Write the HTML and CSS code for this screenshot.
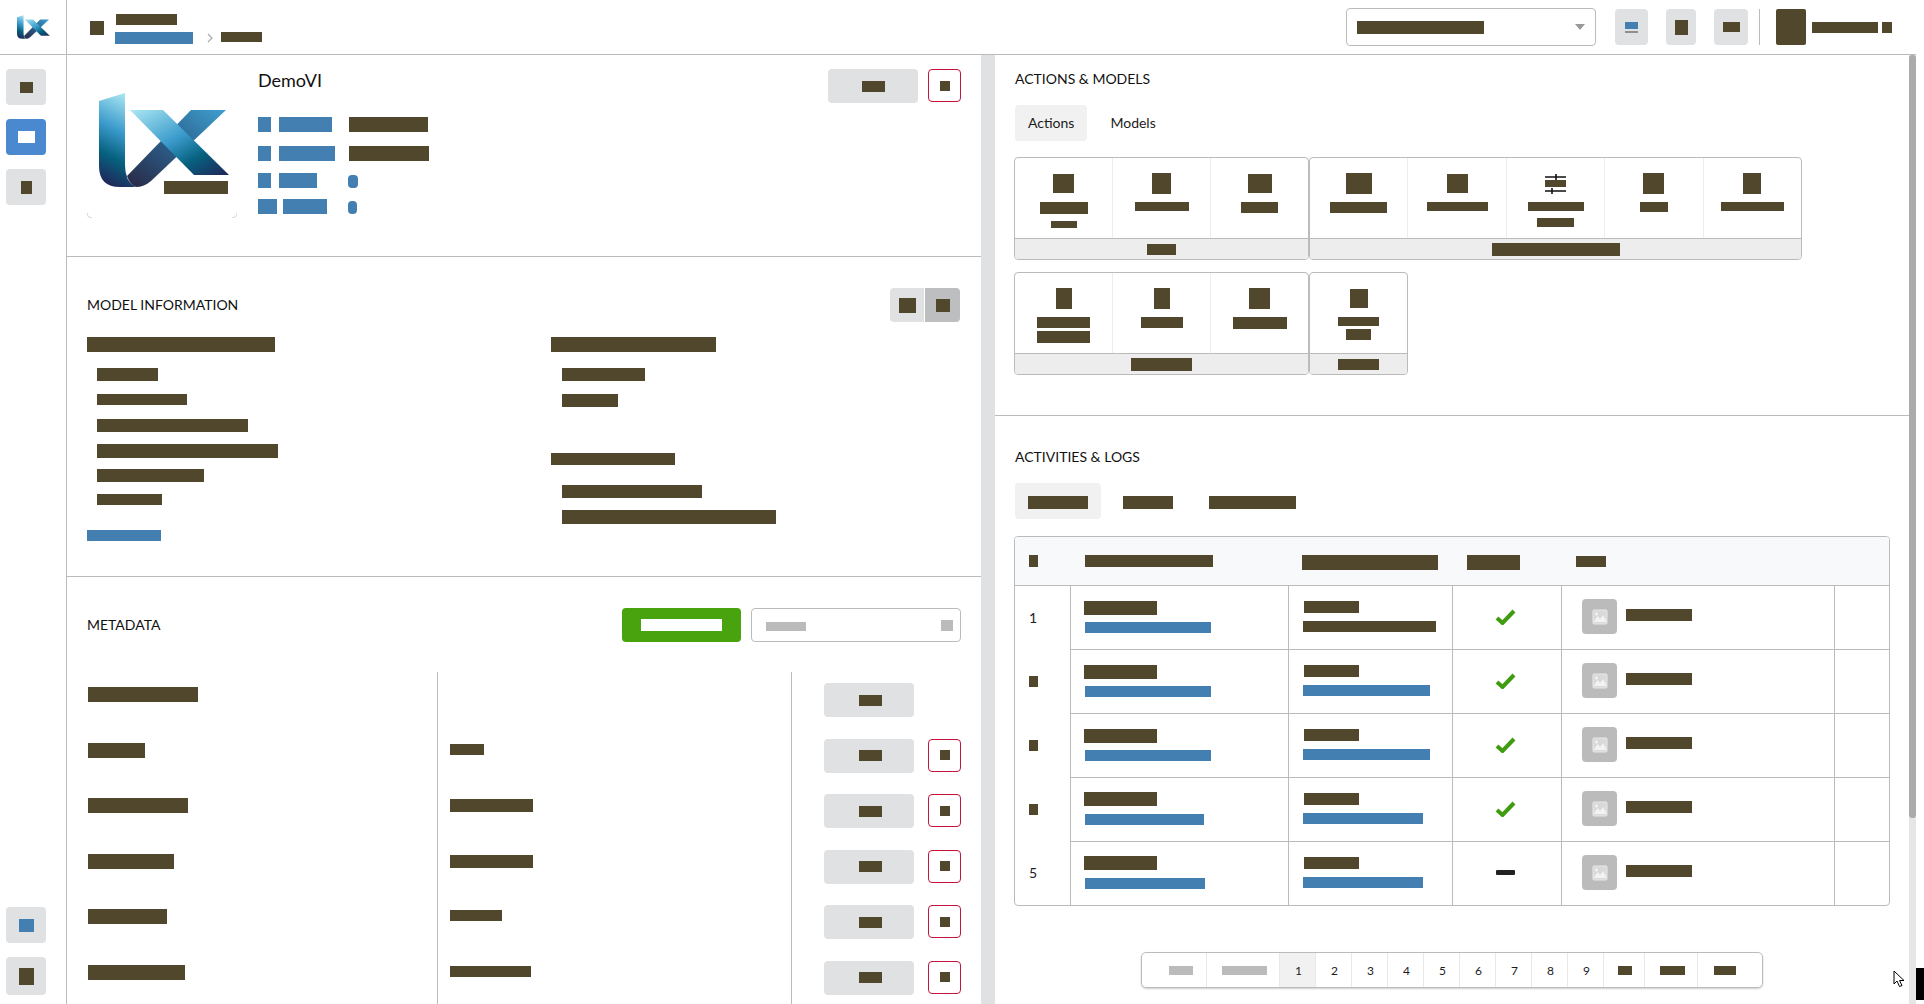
FILE: index.html
```html
<!DOCTYPE html>
<html lang="en">
<head>
    <meta charset="UTF-8">
    <meta name="viewport" content="width=device-width, initial-scale=1.0">
    <title>DemoVI</title>
    <link rel="stylesheet" href="styles.css">
</head>
<body>
    <svg class="defs" width="0" height="0">
        <defs>
            <linearGradient id="lGrad" x1="0.6" y1="0" x2="0.4" y2="1">
                <stop offset="0" stop-color="#a6e4f1"/>
                <stop offset="0.4" stop-color="#3a9acb"/>
                <stop offset="0.7" stop-color="#06617f"/>
                <stop offset="1" stop-color="#20285a"/>
            </linearGradient>
            <linearGradient id="backGrad" x1="0" y1="1" x2="1" y2="0">
                <stop offset="0" stop-color="#2a2743"/>
                <stop offset="0.5" stop-color="#2b5f8b"/>
                <stop offset="1" stop-color="#3ea0cf"/>
            </linearGradient>
            <linearGradient id="frontGrad" x1="0.05" y1="0" x2="0.95" y2="1">
                <stop offset="0" stop-color="#a6e4f1"/>
                <stop offset="0.45" stop-color="#3a9acb"/>
                <stop offset="0.72" stop-color="#06617f"/>
                <stop offset="1" stop-color="#20285a"/>
            </linearGradient>
            <symbol id="lx" viewBox="0 0 131 94">
                <path d="M0 8 L26 0 V72 Q26 88 36 94 H21 Q0 94 0 73 Z" fill="url(#lGrad)"/>
                <path d="M92 17 H127 L52 88 Q45 94 37 94 Q31 92 28 83 Z" fill="url(#backGrad)"/>
                <path d="M31 17 H64 L130 82 H95 Z" fill="url(#frontGrad)"/>
            </symbol>
            <symbol id="photo" viewBox="0 0 16 16">
                <rect x="1" y="1" width="14" height="14" rx="1" fill="#d9d9d9" stroke="#e8e8e8"/>
                <circle cx="4.5" cy="5" r="1.5" fill="#f2f2f2"/>
                <path d="M2 12 L6 7 L8 10 L11 6 L14 11 V13 H2 Z" fill="#f2f2f2"/>
            </symbol>
            <symbol id="tick" viewBox="0 0 21 16">
                <path d="M2 9 L7.5 14 L19 2" fill="none" stroke="#3f9c10" stroke-width="4"/>
            </symbol>
        </defs>
    </svg>

    <div class="page">
        <header class="topbar">
            <div class="brand">
                <svg class="brand-logo"><use href="#lx"/></svg>
            </div>
            <div class="crumbs">
                <i class="x w14 h14 crumb-icon"></i>
                <div class="crumb-text">
                    <i class="x w61 h11 crumb-top"></i>
                    <div class="crumb-path">
                        <i class="b w78 h12"></i>
                        <svg class="chevron" width="6" height="10" viewBox="0 0 6 10"><path d="M1 1 L5 5 L1 9" fill="none" stroke="#aaa" stroke-width="1.2"/></svg>
                        <i class="x w41 h10"></i>
                    </div>
                </div>
            </div>
            <div class="top-tools">
                <div class="select">
                    <i class="x w127 h13"></i>
                    <span class="caret"></span>
                </div>
                <div class="top-btn tb1"><span class="screen"><i class="b w13 h7"></i><i class="stand"></i></span></div>
                <div class="top-btn tb2"><i class="x w13 h15"></i></div>
                <div class="top-btn tb3"><i class="x w17 h10"></i></div>
                <span class="divider"></span>
                <i class="x w30 h36 avatar"></i>
                <i class="x w66 h11 user-name"></i>
                <i class="x w10 h11 user-caret"></i>
            </div>
        </header>

        <div class="main">
            <nav class="side">
                <div class="side-btn"><i class="x w13 h11"></i></div>
                <div class="side-btn active"><i class="wh w17 h12"></i></div>
                <div class="side-btn"><i class="x w11 h13"></i></div>
                <div class="side-bottom">
                    <div class="side-btn"><i class="b w15 h13"></i></div>
                    <div class="side-btn side-btn-tall"><i class="x w15 h17"></i></div>
                </div>
            </nav>

            <div class="panel">
                <section class="summary">
                    <div class="logo-box">
                        <svg class="big-logo"><use href="#lx"/></svg>
                        <i class="x w64 h13 logo-tag"></i>
                    </div>
                    <div class="summary-info">
                        <h1 class="model-name">DemoVI</h1>
                        <div class="fact">
                            <div class="fact-key"><i class="b w13 h15"></i><i class="b w53 h15"></i></div>
                            <i class="x w79 h15"></i>
                        </div>
                        <div class="fact">
                            <div class="fact-key"><i class="b w13 h15"></i><i class="b w56 h15"></i></div>
                            <i class="x w80 h15"></i>
                        </div>
                        <div class="fact">
                            <div class="fact-key"><i class="b w13 h15"></i><i class="b w38 h15"></i></div>
                            <i class="b w10 h13 pill"></i>
                        </div>
                        <div class="fact">
                            <div class="fact-key key-wide"><i class="b w19 h15"></i><i class="b w44 h15"></i></div>
                            <i class="b w9 h13 pill"></i>
                        </div>
                    </div>
                    <div class="summary-actions">
                        <div class="btn btn-wide"><i class="x w23 h11"></i></div>
                        <div class="btn-red"><i class="x w10 h10"></i></div>
                    </div>
                </section>

                <section class="model-info">
                    <div class="head-row">
                        <h2>MODEL INFORMATION</h2>
                        <div class="toggle">
                            <span class="toggle-on"><i class="x w17 h15"></i></span>
                            <span class="toggle-off"><i class="x w14 h13"></i></span>
                        </div>
                    </div>
                    <div class="info-cols">
                        <div class="info-col">
                            <i class="x w188 h15 info-head"></i>
                            <div class="info-item tall"><i class="x w61 h13"></i></div>
                            <div class="info-item"><i class="x w90 h11"></i></div>
                            <div class="info-item"><i class="x w151 h13"></i></div>
                            <div class="info-item"><i class="x w181 h14"></i></div>
                            <div class="info-item"><i class="x w107 h13"></i></div>
                            <div class="info-item"><i class="x w65 h11"></i></div>
                            <i class="b w74 h11 info-link"></i>
                        </div>
                        <div class="info-col info-col-right">
                            <i class="x w165 h15 info-head"></i>
                            <div class="info-item tall"><i class="x w83 h13"></i></div>
                            <div class="info-item"><i class="x w56 h13"></i></div>
                            <i class="x w124 h12 info-head2"></i>
                            <div class="info-item"><i class="x w140 h13"></i></div>
                            <div class="info-item"><i class="x w214 h14"></i></div>
                        </div>
                    </div>
                </section>

                <section class="metadata">
                    <div class="head-row">
                        <h2>METADATA</h2>
                        <div class="meta-tools">
                            <div class="btn-green"><i class="wh w81 h12"></i></div>
                            <div class="search">
                                <i class="g w40 h9 search-text"></i>
                                <i class="g w12 h11"></i>
                            </div>
                        </div>
                    </div>
                    <div class="meta-table">
                        <div class="meta-row">
                            <div class="mc"><i class="x w110 h15"></i></div>
                            <div class="mc"></div>
                            <div class="mc mc-act">
                                <div class="btn btn-row"><i class="x w23 h11"></i></div>
                            </div>
                        </div>
                        <div class="meta-row">
                            <div class="mc"><i class="x w57 h15"></i></div>
                            <div class="mc"><i class="x w34 h11"></i></div>
                            <div class="mc mc-act">
                                <div class="btn btn-row"><i class="x w23 h11"></i></div>
                                <div class="btn-red"><i class="x w10 h10"></i></div>
                            </div>
                        </div>
                        <div class="meta-row">
                            <div class="mc"><i class="x w100 h15"></i></div>
                            <div class="mc"><i class="x w83 h13"></i></div>
                            <div class="mc mc-act">
                                <div class="btn btn-row"><i class="x w23 h11"></i></div>
                                <div class="btn-red"><i class="x w10 h10"></i></div>
                            </div>
                        </div>
                        <div class="meta-row">
                            <div class="mc"><i class="x w86 h15"></i></div>
                            <div class="mc"><i class="x w83 h13"></i></div>
                            <div class="mc mc-act">
                                <div class="btn btn-row"><i class="x w23 h11"></i></div>
                                <div class="btn-red"><i class="x w10 h10"></i></div>
                            </div>
                        </div>
                        <div class="meta-row">
                            <div class="mc"><i class="x w79 h15"></i></div>
                            <div class="mc"><i class="x w52 h11"></i></div>
                            <div class="mc mc-act">
                                <div class="btn btn-row"><i class="x w23 h11"></i></div>
                                <div class="btn-red"><i class="x w10 h10"></i></div>
                            </div>
                        </div>
                        <div class="meta-row">
                            <div class="mc"><i class="x w97 h15"></i></div>
                            <div class="mc"><i class="x w81 h11"></i></div>
                            <div class="mc mc-act">
                                <div class="btn btn-row"><i class="x w23 h11"></i></div>
                                <div class="btn-red"><i class="x w10 h10"></i></div>
                            </div>
                        </div>
                    </div>
                </section>
            </div>

            <div class="gutter"></div>

            <div class="panel panel-right">
                <section class="actions">
                    <h2>ACTIONS &amp; MODELS</h2>
                    <div class="tabs tabs-models">
                        <span class="tab tab-on">Actions</span>
                        <span class="tab">Models</span>
                    </div>
                    <div class="group-row">
                        <div class="group g3">
                            <div class="cells">
                                <div class="cell"><span class="ico"><i class="x w21 h19"></i></span><i class="x w48 h12 lbl"></i><i class="x w26 h7 lbl2"></i></div>
                                <div class="cell"><span class="ico"><i class="x w19 h21"></i></span><i class="x w54 h9 lbl"></i></div>
                                <div class="cell"><span class="ico"><i class="x w24 h19"></i></span><i class="x w37 h11 lbl"></i></div>
                            </div>
                            <div class="group-foot"><i class="x w29 h11"></i></div>
                        </div>
                        <div class="group g5">
                            <div class="cells">
                                <div class="cell"><span class="ico"><i class="x w26 h21"></i></span><i class="x w57 h11 lbl"></i></div>
                                <div class="cell"><span class="ico"><i class="x w21 h19"></i></span><i class="x w61 h9 lbl"></i></div>
                                <div class="cell">
                                    <span class="ico ico-tune">
                                        <svg width="21" height="20" viewBox="0 0 21 20"><path d="M0 3 H21 M11 0 V6 M0 17 H21 M7 14 V20" stroke="#111" stroke-width="1.6" fill="none"/></svg>
                                        <i class="x w21 h7 tune-mid"></i>
                                    </span>
                                    <i class="x w56 h9 lbl"></i><i class="x w37 h9 lbl2"></i>
                                </div>
                                <div class="cell"><span class="ico"><i class="x w21 h21"></i></span><i class="x w28 h10 lbl"></i></div>
                                <div class="cell"><span class="ico"><i class="x w18 h21"></i></span><i class="x w63 h9 lbl"></i></div>
                            </div>
                            <div class="group-foot"><i class="x w128 h13"></i></div>
                        </div>
                    </div>
                    <div class="group-row second">
                        <div class="group g3">
                            <div class="cells">
                                <div class="cell"><span class="ico"><i class="x w16 h21"></i></span><i class="x w53 h11 lbl"></i><i class="x w53 h12 lbl3"></i></div>
                                <div class="cell"><span class="ico"><i class="x w16 h21"></i></span><i class="x w42 h11 lbl"></i></div>
                                <div class="cell"><span class="ico"><i class="x w21 h21"></i></span><i class="x w54 h12 lbl"></i></div>
                            </div>
                            <div class="group-foot"><i class="x w61 h13"></i></div>
                        </div>
                        <div class="group g1">
                            <div class="cells">
                                <div class="cell"><span class="ico"><i class="x w18 h19"></i></span><i class="x w41 h9 lbl"></i><i class="x w25 h11 lbl3"></i></div>
                            </div>
                            <div class="group-foot"><i class="x w41 h11"></i></div>
                        </div>
                    </div>
                </section>

                <section class="activities">
                    <h2>ACTIVITIES &amp; LOGS</h2>
                    <div class="tabs tabs-logs">
                        <span class="tab tab-on"><i class="x w60 h13"></i></span>
                        <span class="tab"><i class="x w50 h13"></i></span>
                        <span class="tab"><i class="x w87 h13"></i></span>
                    </div>
                    <div class="log-table">
                        <div class="log-head">
                            <span><i class="x w9 h12"></i></span>
                            <span><i class="x w128 h12"></i></span>
                            <span><i class="x w136 h15"></i></span>
                            <span><i class="x w53 h15"></i></span>
                            <span><i class="x w30 h11"></i></span>
                            <span></span>
                        </div>
                        <div class="log-row">
                            <div class="num">1</div>
                            <div class="lc"><i class="x w73 h14"></i><i class="b w126 h11"></i></div>
                            <div class="lc"><i class="x w55 h12"></i><i class="x w133 h11"></i></div>
                            <div class="st"><svg class="tick"><use href="#tick"/></svg></div>
                            <div class="thumb-cell"><span class="thumb"><svg class="photo"><use href="#photo"/></svg></span><i class="x w66 h12"></i></div>
                            <div></div>
                        </div>
                        <div class="log-row">
                            <div class="num"><i class="x w9 h11"></i></div>
                            <div class="lc"><i class="x w73 h14"></i><i class="b w126 h11"></i></div>
                            <div class="lc"><i class="x w55 h12"></i><i class="b w127 h11"></i></div>
                            <div class="st"><svg class="tick"><use href="#tick"/></svg></div>
                            <div class="thumb-cell"><span class="thumb"><svg class="photo"><use href="#photo"/></svg></span><i class="x w66 h12"></i></div>
                            <div></div>
                        </div>
                        <div class="log-row">
                            <div class="num"><i class="x w9 h11"></i></div>
                            <div class="lc"><i class="x w73 h14"></i><i class="b w126 h11"></i></div>
                            <div class="lc"><i class="x w55 h12"></i><i class="b w127 h11"></i></div>
                            <div class="st"><svg class="tick"><use href="#tick"/></svg></div>
                            <div class="thumb-cell"><span class="thumb"><svg class="photo"><use href="#photo"/></svg></span><i class="x w66 h12"></i></div>
                            <div></div>
                        </div>
                        <div class="log-row">
                            <div class="num"><i class="x w9 h11"></i></div>
                            <div class="lc"><i class="x w73 h14"></i><i class="b w119 h11"></i></div>
                            <div class="lc"><i class="x w55 h12"></i><i class="b w120 h11"></i></div>
                            <div class="st"><svg class="tick"><use href="#tick"/></svg></div>
                            <div class="thumb-cell"><span class="thumb"><svg class="photo"><use href="#photo"/></svg></span><i class="x w66 h12"></i></div>
                            <div></div>
                        </div>
                        <div class="log-row">
                            <div class="num">5</div>
                            <div class="lc"><i class="x w73 h14"></i><i class="b w120 h11"></i></div>
                            <div class="lc"><i class="x w55 h12"></i><i class="b w120 h11"></i></div>
                            <div class="st"><span class="dash"></span></div>
                            <div class="thumb-cell"><span class="thumb"><svg class="photo"><use href="#photo"/></svg></span><i class="x w66 h12"></i></div>
                            <div></div>
                        </div>
                    </div>
                    <div class="pager-wrap">
                        <div class="pager">
                            <span class="pg pg-first"><i class="g w24 h9"></i></span>
                            <span class="pg pg-prev"><i class="g w45 h9"></i></span>
                            <span class="pg pg-on">1</span>
                            <span class="pg">2</span>
                            <span class="pg">3</span>
                            <span class="pg">4</span>
                            <span class="pg">5</span>
                            <span class="pg">6</span>
                            <span class="pg">7</span>
                            <span class="pg">8</span>
                            <span class="pg">9</span>
                            <span class="pg pg-more"><i class="x w14 h9"></i></span>
                            <span class="pg pg-next"><i class="x w25 h9"></i></span>
                            <span class="pg pg-last"><i class="x w22 h9"></i></span>
                        </div>
                    </div>
                </section>
            </div>

            <div class="scrollbar"><div class="scroll-thumb"></div></div>
        </div>
    </div>

    <div class="strip"><i class="strip-block"></i></div>

    <svg class="cursor" width="13" height="18" viewBox="0 0 13 18"><path d="M1 1 V14 L4 11 L6.500 16.500 L9 15.500 L6.500 10.500 H11 Z" fill="#fff" stroke="#000"/></svg>
</body>
</html>
```

FILE: styles.css
```css
* {
    box-sizing: border-box;
}
body {
    margin: 0;
    height: 1004px;
    overflow: hidden;
    display: flex;
    background: #fff;
    font-family: Lato, "Open Sans", sans-serif;
    color: #1c1c1c;
}
h1, h2 {
    margin: 0;
    font-weight: 400;
}
h2 {
    font-size: 14px;
    line-height: 20px;
    color: #111;
}
i {
    display: block;
    flex: none;
}
.defs {
    position: absolute;
}

/* blocks */
.x { background: #50472c; }
.b { background: #437fb0; }
.g { background: #bbbbbb; }
.wh { background: #fff; }
.w9 { width: 9px; } .w10 { width: 10px; } .w11 { width: 11px; } .w12 { width: 12px; }
.w13 { width: 13px; } .w14 { width: 14px; } .w15 { width: 15px; } .w16 { width: 16px; }
.w17 { width: 17px; } .w18 { width: 18px; } .w19 { width: 19px; } .w21 { width: 21px; }
.w22 { width: 22px; } .w23 { width: 23px; } .w24 { width: 24px; } .w25 { width: 25px; }
.w26 { width: 26px; } .w28 { width: 28px; } .w29 { width: 29px; } .w30 { width: 30px; }
.w34 { width: 34px; } .w37 { width: 37px; } .w38 { width: 38px; } .w40 { width: 40px; }
.w41 { width: 41px; } .w42 { width: 42px; } .w44 { width: 44px; } .w45 { width: 45px; }
.w48 { width: 48px; } .w50 { width: 50px; } .w52 { width: 52px; } .w53 { width: 53px; }
.w54 { width: 54px; } .w55 { width: 55px; } .w56 { width: 56px; } .w57 { width: 57px; }
.w60 { width: 60px; } .w61 { width: 61px; } .w63 { width: 63px; } .w64 { width: 64px; }
.w65 { width: 65px; } .w66 { width: 66px; } .w73 { width: 73px; } .w74 { width: 74px; }
.w78 { width: 78px; } .w79 { width: 79px; } .w80 { width: 80px; } .w81 { width: 81px; }
.w83 { width: 83px; } .w86 { width: 86px; } .w87 { width: 87px; } .w90 { width: 90px; }
.w97 { width: 97px; } .w100 { width: 100px; } .w107 { width: 107px; } .w110 { width: 110px; }
.w119 { width: 119px; } .w120 { width: 120px; } .w124 { width: 124px; } .w126 { width: 126px; }
.w127 { width: 127px; } .w128 { width: 128px; } .w133 { width: 133px; } .w136 { width: 136px; }
.w140 { width: 140px; } .w151 { width: 151px; } .w165 { width: 165px; } .w181 { width: 181px; }
.w188 { width: 188px; } .w214 { width: 214px; }
.h7 { height: 7px; } .h9 { height: 9px; } .h10 { height: 10px; } .h11 { height: 11px; }
.h12 { height: 12px; } .h13 { height: 13px; } .h14 { height: 14px; } .h15 { height: 15px; }
.h17 { height: 17px; } .h19 { height: 19px; } .h21 { height: 21px; } .h36 { height: 36px; }

/* page frame */
.page {
    width: 1916px;
    height: 1004px;
    display: flex;
    flex-direction: column;
}
.strip {
    width: 8px;
    padding-top: 968px;
}
.strip-block {
    height: 32px;
    background: #000;
}
.cursor {
    position: absolute;
    left: 1893px;
    top: 970px;
}

/* top bar */
.topbar {
    height: 55px;
    flex: none;
    display: flex;
    align-items: center;
    border-bottom: 1px solid #bbb;
}
.brand {
    width: 67px;
    height: 54px;
    border-right: 1px solid #bbb;
    display: flex;
    align-items: center;
    justify-content: center;
}
.brand-logo {
    width: 33px;
    height: 24px;
}
.crumbs {
    height: 54px;
    display: flex;
    align-items: flex-start;
    margin-left: 23px;
    padding-top: 14px;
    gap: 11px;
}
.crumb-icon {
    margin-top: 7px;
}
.crumb-top {
    margin: 0 0 7px 1px;
}
.crumb-path {
    display: flex;
    align-items: flex-start;
    gap: 14px;
}
.chevron {
    margin: 1px -6px 0 0;
}
.top-tools {
    margin-left: auto;
    padding-right: 24px;
    display: flex;
    align-items: center;
}
.select {
    width: 250px;
    height: 38px;
    border: 1px solid #bbb;
    border-radius: 4px;
    padding: 0 10px;
    display: flex;
    align-items: center;
    justify-content: space-between;
}
.caret {
    width: 0;
    height: 0;
    border: 5px solid transparent;
    border-top: 6px solid #999;
    border-bottom: 0;
}
.top-btn {
    height: 36px;
    background: #e0e1e3;
    border-radius: 4px;
    display: flex;
    align-items: center;
    justify-content: center;
}
.tb1 { width: 33px; margin-left: 19px; }
.tb2 { width: 30px; margin-left: 18px; }
.tb3 { width: 34px; margin-left: 18px; }
.screen {
    width: 13px;
}
.stand {
    height: 2px;
    margin-top: 2px;
    background: #8f8f8f;
}
.divider {
    width: 1px;
    height: 36px;
    margin: 0 16px 0 11px;
    background: #bbb;
}
.avatar {
    border-radius: 2px;
}
.user-name {
    margin-left: 6px;
}
.user-caret {
    margin-left: 4px;
}

/* main area */
.main {
    flex: 1;
    display: flex;
    min-height: 0;
}
.side {
    width: 67px;
    flex: none;
    border-right: 1px solid #bbb;
    padding: 14px 0 9px 6px;
    display: flex;
    flex-direction: column;
    gap: 14px;
}
.side-btn {
    width: 40px;
    height: 36px;
    border-radius: 4px;
    background: #e0e1e3;
    display: flex;
    align-items: center;
    justify-content: center;
}
.side-btn.active {
    background: #4a88d0;
}
.side-btn-tall {
    height: 38px;
}
.side-bottom {
    margin-top: auto;
    display: flex;
    flex-direction: column;
    gap: 14px;
}
.panel {
    width: 914px;
    flex: none;
    overflow: hidden;
}
.gutter {
    width: 14px;
    flex: none;
    background: #e0e1e3;
}
.scrollbar {
    width: 7px;
    flex: none;
    background: #e6e6e6;
}
.scroll-thumb {
    height: 763px;
    background: #ababab;
    border-radius: 3px;
}

/* model summary */
.summary {
    height: 202px;
    border-bottom: 1px solid #bbb;
    padding: 14px 20px 0;
    display: flex;
    align-items: flex-start;
}
.logo-box {
    width: 150px;
    height: 128px;
    margin-top: 21px;
    position: relative;
}
.logo-box::before,
.logo-box::after {
    content: "";
    position: absolute;
    bottom: 0;
    width: 4px;
    height: 4px;
    border-bottom: 1px solid #ddd;
}
.logo-box::before {
    left: 0;
    border-left: 1px solid #ddd;
    border-radius: 0 0 0 4px;
}
.logo-box::after {
    right: 0;
    border-right: 1px solid #ddd;
    border-radius: 0 0 4px 0;
}
.big-logo {
    display: block;
    width: 131px;
    height: 94px;
    margin: 3px 0 0 12px;
}
.logo-tag {
    position: absolute;
    left: 77px;
    top: 91px;
}
.summary-info {
    margin: 1px 0 0 21px;
}
.model-name {
    font-size: 18px;
    line-height: 20px;
    margin-bottom: 27px;
    color: #111;
}
.fact {
    height: 15px;
    display: grid;
    grid-template-columns: 91px auto;
    margin-bottom: 12px;
}
.fact:nth-child(2) {
    margin-bottom: 14px;
}
.fact:nth-child(4) {
    margin-bottom: 11px;
}
.fact-key {
    display: flex;
    gap: 8px;
}
.key-wide {
    gap: 6px;
}
.pill {
    border-radius: 4px;
    margin: 2px 0 0 -1px;
}
.summary-actions {
    margin-left: auto;
    display: flex;
    gap: 10px;
}
.btn {
    height: 34px;
    background: #e0e1e3;
    border-radius: 4px;
    display: flex;
    align-items: center;
    justify-content: center;
}
.btn-wide {
    width: 90px;
    justify-content: flex-start;
    padding-left: 34px;
}
.btn-red {
    width: 33px;
    height: 33px;
    border: 1px solid #c8143c;
    border-radius: 4px;
    display: flex;
    align-items: center;
    justify-content: center;
}

/* model information */
.model-info {
    height: 320px;
    border-bottom: 1px solid #bbb;
    padding: 31px 21px 0 20px;
}
.head-row {
    height: 34px;
    display: flex;
    align-items: center;
    justify-content: space-between;
}
.toggle {
    display: flex;
    gap: 1px;
    height: 34px;
}
.toggle span {
    width: 34px;
    display: flex;
    align-items: center;
    justify-content: center;
}
.toggle-on {
    background: #e0e1e3;
    border-radius: 4px 0 0 4px;
}
.toggle .toggle-off {
    width: 35px;
    background: #bdbec0;
    border-radius: 0 4px 4px 0;
}
.info-cols {
    margin-top: 15px;
    display: grid;
    grid-template-columns: 464px 1fr;
}
.info-head {
    margin-bottom: 16px;
}
.info-item {
    height: 25px;
    padding-left: 10px;
}
.info-item.tall {
    height: 26px;
}
.info-col-right .info-item {
    padding-left: 11px;
}
.info-link {
    margin-top: 11px;
}
.info-head2 {
    margin: 34px 0 20px;
}

/* metadata */
.metadata {
    padding: 31px 0 0;
}
.metadata .head-row {
    padding: 0 20px;
}
.meta-tools {
    display: flex;
    gap: 10px;
}
.btn-green {
    width: 119px;
    height: 34px;
    background: #48a30f;
    border-radius: 4px;
    display: flex;
    align-items: center;
    justify-content: center;
}
.search {
    width: 210px;
    height: 34px;
    border: 1px solid #bbb;
    border-radius: 4px;
    padding: 0 7px 0 14px;
    display: flex;
    align-items: center;
    justify-content: space-between;
}
.search-text {
    margin-top: 2px;
}
.meta-table {
    margin-top: 30px;
}
.meta-row {
    height: 55.6px;
    display: grid;
    grid-template-columns: 371px 354px 1fr;
}
.mc {
    border-right: 1px solid #bbb;
    padding: 15px 0 0 21px;
}
.mc:nth-child(2) {
    padding: 16px 0 0 12px;
}
.mc-act {
    border-right: 0;
    padding: 11px 0 0 32px;
    display: flex;
    align-items: flex-start;
    gap: 14px;
}
.btn-row {
    width: 90px;
    padding-left: 2px;
}

/* actions */
.actions {
    height: 361px;
    border-bottom: 1px solid #bbb;
    padding: 14px 0 0 20px;
}
.tabs {
    display: flex;
    align-items: center;
    font-size: 14px;
}
.tabs-models {
    margin-top: 16px;
    height: 36px;
}
.tab {
    height: 36px;
    padding: 0 13px;
    border-radius: 4px;
    display: flex;
    align-items: center;
}
.tabs-models .tab {
    padding-bottom: 2px;
}
.tab-on {
    background: #f1f1f1;
}
.tabs-models .tab + .tab {
    margin-left: 10px;
}
.group-row {
    display: flex;
    margin: 16px 0 0 -1px;
}
.group-row.second {
    margin-top: 12px;
}
.group {
    border: 1px solid #bbb;
    border-radius: 4px;
    overflow: hidden;
}
.g3 { width: 295px; }
.g5 { width: 493px; }
.g1 { width: 99px; }
.cells {
    height: 80px;
    display: flex;
}
.cell {
    flex: 1;
    min-width: 0;
    padding-top: 15px;
    border-right: 1px solid #eee;
    display: flex;
    flex-direction: column;
    align-items: center;
}
.cell:last-child {
    border-right: 0;
}
.ico {
    height: 21px;
    display: flex;
    align-items: center;
    justify-content: center;
    position: relative;
}
.lbl {
    margin-top: 8px;
}
.lbl2 {
    margin-top: 7px;
}
.lbl3 {
    margin-top: 3px;
}
.tune-mid {
    position: absolute;
    left: 0;
    top: 7px;
}
.group-foot {
    height: 21px;
    background: #ededed;
    border-top: 1px solid #bbb;
    display: flex;
    align-items: center;
    justify-content: center;
}

/* activities */
.activities {
    padding: 31px 0 0 20px;
}
.tabs-logs {
    margin-top: 16px;
}
.tabs-logs i {
    margin-top: 2px;
}
.tabs-logs .tab-on {
    width: 86px;
}
.tabs-logs .tab + .tab {
    margin-left: 9px;
}
.tabs-logs .tab:last-child {
    margin-left: 10px;
}
.log-table {
    width: 876px;
    margin: 17px 0 0 -1px;
    border: 1px solid #bbb;
    border-radius: 4px;
    overflow: hidden;
}
.log-head, .log-row {
    display: grid;
    grid-template-columns: 56px 218px 164px 109px 273px 1fr;
}
.log-head {
    height: 49px;
    background: #f8f9fb;
    border-bottom: 1px solid #bbb;
}
.log-head span {
    display: flex;
    align-items: flex-start;
    padding: 18px 0 0 14px;
}
.log-head span:nth-child(3) {
    padding-left: 13px;
}
.log-head span:nth-child(5) {
    padding-top: 19px;
}
.log-row {
    height: 64px;
}
.log-row:last-child {
    height: 63px;
}
.log-row > div {
    border-right: 1px solid #bbb;
    border-bottom: 1px solid #bbb;
}
.log-row > .num {
    border-bottom: 0;
}
.log-row > div:last-child {
    border-right: 0;
}
.log-row:last-child > div {
    border-bottom: 0;
}
.num {
    padding: 0 0 2px 14px;
    display: flex;
    align-items: center;
    font-size: 14px;
    color: #222;
}
.lc {
    padding: 15px 0 0 14px;
    display: flex;
    flex-direction: column;
    gap: 8px;
}
.lc:nth-child(2) {
    gap: 7px;
}
.lc:nth-child(2) i:first-child {
    margin-left: -1px;
}
.lc:nth-child(3) i:first-child {
    margin-left: 1px;
}
.log-row:nth-child(n+5) .lc:nth-child(2) i:first-child {
    margin: -1px 0 1px -1px;
}
.st {
    padding: 0 4px 2px 0;
    display: flex;
    align-items: center;
    justify-content: center;
}
.tick {
    width: 21px;
    height: 16px;
}
.dash {
    width: 19px;
    height: 5px;
    background: #222;
    border-radius: 1px;
}
.thumb-cell {
    padding: 0 0 2px 20px;
    display: flex;
    align-items: center;
    gap: 9px;
}
.thumb-cell i {
    margin-bottom: 4px;
}
.thumb {
    width: 35px;
    height: 35px;
    background: #bbb;
    border-radius: 4px;
    display: flex;
    align-items: center;
    justify-content: center;
}
.photo {
    width: 16px;
    height: 16px;
}
.pager-wrap {
    width: 874px;
    margin-top: 46px;
    display: flex;
    justify-content: center;
}
.pager {
    height: 36px;
    display: flex;
    border: 1px solid #bbb;
    border-radius: 5px;
    box-shadow: 0 1px 2px rgba(0, 0, 0, 0.2);
    overflow: hidden;
    font-size: 12px;
}
.pg {
    width: 36px;
    padding-left: 2px;
    border-right: 1px solid #e8e8e8;
    display: flex;
    align-items: center;
    justify-content: center;
}
.pg-on { background: #f1f1f1; }
.pg-first { width: 65px; justify-content: flex-end; padding-right: 13px; }
.pg-prev { width: 73px; }
.pg-more { width: 41px; }
.pg-next { width: 53px; }
.pg-last { width: 64px; border-right: 0; justify-content: flex-start; padding-left: 16px; }
```
